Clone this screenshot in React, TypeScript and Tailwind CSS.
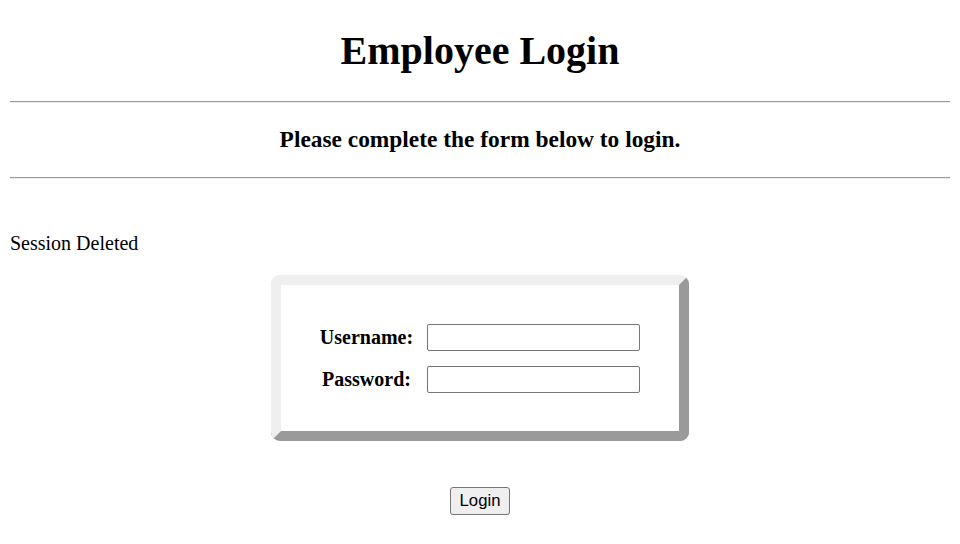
export default function App() {
  return (
    <div className="min-h-[544px] bg-white px-[10px] font-['Liberation_Serif',serif] text-[20px] text-black">
      <h1 className="pt-[28px] text-center text-[40px] font-bold leading-[46px]">Employee Login</h1>
      <hr className="mt-[27px] border-t border-b border-t-[#9a9a9a] border-b-[#eeeeee]" />
      <h3 className="mt-[23px] text-center text-[23.4px] font-bold leading-[27px]">
        Please complete the form below to login.
      </h3>
      <hr className="mt-[24px] border-t border-b border-t-[#9a9a9a] border-b-[#eeeeee]" />

      <p className="mt-[53px] leading-[23px]">Session Deleted</p>

      <div className="mt-[20px] flex justify-center">
        <div className="w-[418px] rounded-[9px] border-[10px] border-t-[#efefef] border-l-[#efefef] border-r-[#9a9a9a] border-b-[#9a9a9a] bg-white pt-[39px] pb-[38px]">
          <div className="flex flex-col gap-[15px] pl-[30px]">
            <div className="flex items-center">
              <span className="w-[111px] text-center font-bold leading-[23px]">Username:</span>
              <input
                type="text"
                className="ml-[5px] h-[27px] w-[213px] rounded-[2px] border border-[#767676] bg-white px-[2px] outline-none"
              />
            </div>
            <div className="flex items-center">
              <span className="w-[111px] text-center font-bold leading-[23px]">Password:</span>
              <input
                type="password"
                className="ml-[5px] h-[27px] w-[213px] rounded-[2px] border border-[#767676] bg-white px-[2px] outline-none"
              />
            </div>
          </div>
        </div>
      </div>

      <div className="mt-[46px] flex justify-center">
        <button className="h-[28px] w-[60px] rounded-[3px] border border-[#767676] bg-[#efefef] font-['Liberation_Sans',Arial,sans-serif] text-[16.7px] leading-none text-black">
          Login
        </button>
      </div>
    </div>
  );
}
